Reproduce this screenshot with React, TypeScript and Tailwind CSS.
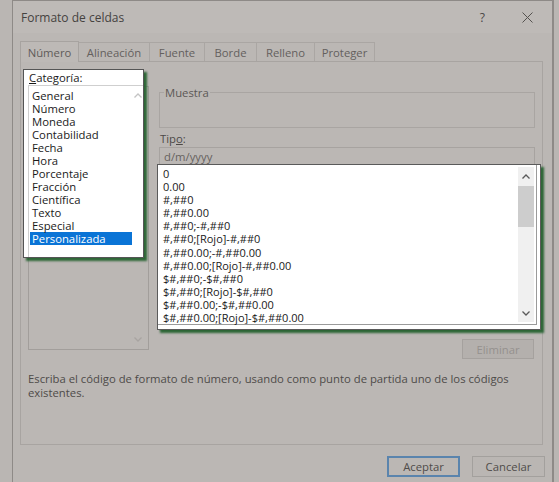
import React from "react";

const categorias = [
  "General",
  "Número",
  "Moneda",
  "Contabilidad",
  "Fecha",
  "Hora",
  "Porcentaje",
  "Fracción",
  "Científica",
  "Texto",
  "Especial",
  "Personalizada",
];

const formatos = [
  "0",
  "0.00",
  "#,##0",
  "#,##0.00",
  "#,##0;-#,##0",
  "#,##0;[Rojo]-#,##0",
  "#,##0.00;-#,##0.00",
  "#,##0.00;[Rojo]-#,##0.00",
  "$#,##0;-$#,##0",
  "$#,##0;[Rojo]-$#,##0",
  "$#,##0.00;-$#,##0.00",
  "$#,##0.00;[Rojo]-$#,##0.00",
];

const tabs = [
  { label: "Número", w: "w-[59px]" },
  { label: "Alineación", w: "w-[71px]" },
  { label: "Fuente", w: "w-[55px]" },
  { label: "Borde", w: "w-[52px]" },
  { label: "Relleno", w: "w-[58px]" },
  { label: "Proteger", w: "w-[60px]" },
];

const Chevron = ({ up, color }: { up?: boolean; color: string }) => (
  <svg width="8" height="5" viewBox="0 0 8 5">
    <path
      d={up ? "M0.5 4.5 L4 1 L7.5 4.5" : "M0.5 0.5 L4 4 L7.5 0.5"}
      fill="none"
      stroke={color}
      strokeWidth="1.3"
    />
  </svg>
);

const App = () => {
  return (
    <div className="relative w-[559px] h-[482px] overflow-hidden bg-[#bab6b3] font-['Open_Sans',sans-serif] text-[11.3px] leading-[13px] text-[#4c4947]">
      {/* dialog */}
      <div className="ml-[12px] w-[542px] h-[500px] border-l border-t border-r-2 border-[#8e8a87] flex flex-col">
        {/* title bar */}
        <div className="h-[32px] bg-[#bebab7] flex items-center pl-[8px] text-[12px] text-[#45423f]">
          <span>Formato de celdas</span>
          <span className="ml-auto mr-[37px] text-[12px] text-[#4a4745]">?</span>
          <svg width="11" height="11" viewBox="0 0 11 11" className="mr-[19px]">
            <path d="M0.5 0.5 L10.5 10.5 M10.5 0.5 L0.5 10.5" stroke="#55524f" strokeWidth="1" />
          </svg>
        </div>

        <div className="pl-[7px] pr-[9px] pt-[7px] bg-[#bbb7b4] flex-1">
          {/* tabs */}
          <div className="flex items-end h-[21px]">
            {tabs.map((t, i) => (
              <div
                key={t.label}
                className={
                  i === 0
                    ? `${t.w} h-[21px] border border-b-0 border-[#a7a3a0] bg-[#bdb9b6] flex items-center justify-center text-[#5f5b59] -mb-px relative`
                    : `${t.w} h-[19px] border border-l-0 border-b-0 border-[#aaa6a3] flex items-center justify-center text-[#64605e]`
                }
              >
                {t.label}
              </div>
            ))}
          </div>

          {/* panel */}
          <div className="h-[384px] border border-[#a8a4a1] flex flex-col">
            <div className="flex pl-[7px]">
              {/* categoria column */}
              <div className="w-[121px] flex flex-col pt-[10px]">
                <div className="pl-[1px] h-[14px]">
                  <u>C</u>ategoría:
                </div>
                <div className="h-[264px] border border-[#a29e9b] flex justify-end items-end pr-[6px] pb-[7px]">
                  <Chevron color="#a8a4a1" />
                </div>
              </div>

              {/* right column */}
              <div className="ml-[10px] w-[376px] flex flex-col">
                <fieldset className="mt-[24px] h-[42px] border border-[#a9a5a2] pl-[4px]">
                  <legend className="px-[1px] text-[#5c5856]">Muestra</legend>
                </fieldset>
                <div className="mt-[4px] h-[13px] pl-[1px]">
                  Tip<u>o</u>:
                </div>
                <div className="mt-[2px] h-[18px] border border-[#a7a3a0] flex items-center pl-[4px] text-[#66625f]">
                  d/m/yyyy
                </div>
                <div className="h-[166px] border border-[#a7a3a0]" />
                <div className="mt-[8px] self-end mr-[1px] w-[72px] h-[20px] border border-[#a5a19e] bg-[#b4b0ad] flex items-center justify-center text-[#95918e]">
                  Eliminar
                </div>
              </div>
            </div>

            <p className="mt-[13px] pl-[7px] pr-[20px] leading-[14px] text-[#4e4b49]">
              Escriba el código de formato de número, usando como punto de partida uno de los códigos existentes.
            </p>
          </div>

          {/* buttons */}
          <div className="mt-[11px] flex justify-end gap-[12px] mr-[-2px]">
            <div className="w-[73px] h-[21px] border-2 border-[#5a84ad] flex items-center justify-center text-[#4f4c4a]">
              Aceptar
            </div>
            <div className="w-[73px] h-[21px] border border-[#a3a09d] bg-[#bab6b3] flex items-center justify-center text-[#4f4c4a]">
              Cancelar
            </div>
          </div>
        </div>
      </div>

      {/* highlighted category list */}
      <div className="absolute left-[23px] top-[69px] w-[121px] h-[189px] bg-white border border-[#555555] shadow-[3px_3px_2px_rgba(38,98,48,0.95)] text-[#1a1a1a] flex flex-col overflow-hidden">
        <div className="pl-[5px] pt-[1px] h-[15px]">
          <u>C</u>ategoría:
        </div>
        <div className="ml-[4px] flex-1 border-l border-t border-[#cfcfcf] flex">
          <div className="w-[103px] pt-[3px] pl-[1px]">
            {categorias.map((c) => (
              <div
                key={c}
                className={
                  c === "Personalizada"
                    ? "h-[13px] pl-[2px] bg-[#0a74d6] text-white"
                    : "h-[13px] pl-[2px]"
                }
              >
                {c}
              </div>
            ))}
          </div>
          <div className="flex-1 flex justify-center pt-[7px]">
            <Chevron up color="#c4c4c4" />
          </div>
        </div>
      </div>

      {/* highlighted format list */}
      <div className="absolute left-[157px] top-[164px] w-[384px] h-[166px] bg-white border border-[#5a5a5a] shadow-[3px_3px_2px_rgba(38,98,48,0.95)] text-[#1a1a1a] text-[11px]">
        <div className="w-[379px] h-[160px] border-r border-b border-[#9a9a9a] flex">
          <div className="flex-1 pl-[5px] pt-[2px]">
            {formatos.map((f) => (
              <div key={f} className="h-[13.1px] leading-[13.1px]">
                {f}
              </div>
            ))}
          </div>
          <div className="w-[16px] my-[2px] mr-[2px] bg-[#f0f0f0] flex flex-col items-center">
            <div className="h-[19px] flex items-center">
              <Chevron up color="#5a5a5a" />
            </div>
            <div className="w-full h-[41px] bg-[#cdcdcd]" />
            <div className="mt-auto h-[17px] flex items-center">
              <Chevron color="#5a5a5a" />
            </div>
          </div>
        </div>
      </div>
    </div>
  );
};

export default App;
